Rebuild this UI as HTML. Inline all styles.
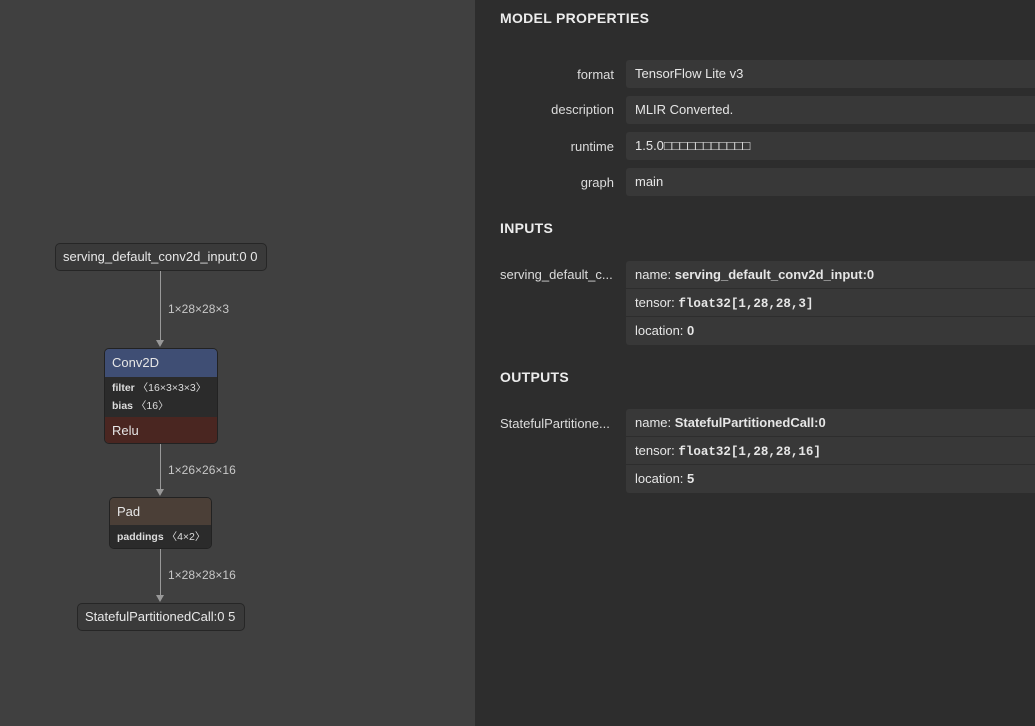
<!DOCTYPE html><html><head><style>
body{margin:0;width:1035px;height:726px;background:#404040;font-family:"Liberation Sans",sans-serif;font-size:13px;color:#e6e6e6;position:relative;overflow:hidden}
.a{position:absolute}
.node{position:absolute;background:#3a3a3a;border:1px solid #262626;border-radius:5px;box-sizing:border-box;padding-left:7px;line-height:25px;color:#e8e8e8;font-size:13px}
.op{position:absolute;border:1px solid #222;border-radius:5px;overflow:hidden;box-sizing:border-box}
.op div{padding-left:7px}
.line{position:absolute;left:160px;width:1px;background:#999}
.arr{position:absolute;left:156px;width:0;height:0;border-left:4px solid transparent;border-right:4px solid transparent;border-top:7px solid #999}
.lbl{position:absolute;left:168px;font-size:12px;color:#c8c8c8}
#p{position:absolute;left:475px;top:0;width:560px;height:726px;background:#2d2d2d}
h{position:absolute;left:25px;font-weight:bold;font-size:14px;color:#ececec;letter-spacing:.3px}
.k{position:absolute;right:421px;font-size:13px;color:#dcdcdc;text-align:right}
.v{position:absolute;left:151px;width:409px;background:#383838;border-radius:3px 0 0 3px;height:28px;line-height:28px;padding-left:9px;box-sizing:border-box;font-size:13px;color:#e6e6e6}
.box{position:absolute;left:151px;width:409px;background:#383838;border-radius:3px 0 0 3px}
.box div{height:28px;line-height:28px;padding-left:9px;border-bottom:1px solid #2d2d2d;box-sizing:border-box}
.box div:last-child{border:none}
code{font-family:"Liberation Mono",monospace;font-weight:bold;font-size:12.5px}
</style></head><body>
<div class="node" style="left:55px;top:243px;width:212px;height:28px">serving_default_conv2d_input:0 0</div>
<div class="line" style="top:271px;height:70px"></div><div class="arr" style="top:340px"></div>
<div class="lbl" style="top:302px">1×28×28×3</div>
<div class="op" style="left:104px;top:348px;width:114px;height:96px">
<div style="background:#3f4e74;height:28px;line-height:28px">Conv2D</div>
<div style="background:#2b2b2b;height:40px;font-size:10.5px;line-height:18px;padding-top:2px;box-sizing:border-box;color:#ddd"><b>filter</b> 〈16×3×3×3〉<br><b>bias</b> 〈16〉</div>
<div style="background:#4a2621;height:28px;line-height:27px">Relu</div></div>
<div class="line" style="top:444px;height:46px"></div><div class="arr" style="top:489px"></div>
<div class="lbl" style="top:463px">1×26×26×16</div>
<div class="op" style="left:109px;top:497px;width:103px;height:52px">
<div style="background:#4b3f37;height:27px;line-height:27px">Pad</div>
<div style="background:#2b2b2b;height:25px;font-size:10.5px;line-height:24px;color:#ddd"><b>paddings</b> 〈4×2〉</div></div>
<div class="line" style="top:549px;height:47px"></div><div class="arr" style="top:595px"></div>
<div class="lbl" style="top:568px">1×28×28×16</div>
<div class="node" style="left:77px;top:603px;width:168px;height:28px">StatefulPartitionedCall:0 5</div>
<div id="p">
<h style="top:10px">MODEL PROPERTIES</h>
<div class="k" style="top:67px">format</div><div class="v" style="top:60px">TensorFlow Lite v3</div>
<div class="k" style="top:102px">description</div><div class="v" style="top:96px">MLIR Converted.</div>
<div class="k" style="top:139px">runtime</div><div class="v" style="top:132px">1.5.0□□□□□□□□□□□</div>
<div class="k" style="top:175px">graph</div><div class="v" style="top:168px">main</div>
<h style="top:220px">INPUTS</h>
<div class="a" style="left:25px;top:267px;color:#dcdcdc">serving_default_c...</div>
<div class="box" style="top:261px"><div>name: <b>serving_default_conv2d_input:0</b></div><div>tensor: <code>float32[1,28,28,3]</code></div><div>location: <b>0</b></div></div>
<h style="top:369px">OUTPUTS</h>
<div class="a" style="left:25px;top:416px;color:#dcdcdc">StatefulPartitione...</div>
<div class="box" style="top:409px"><div>name: <b>StatefulPartitionedCall:0</b></div><div>tensor: <code>float32[1,28,28,16]</code></div><div>location: <b>5</b></div></div>
</div>
</body></html>
